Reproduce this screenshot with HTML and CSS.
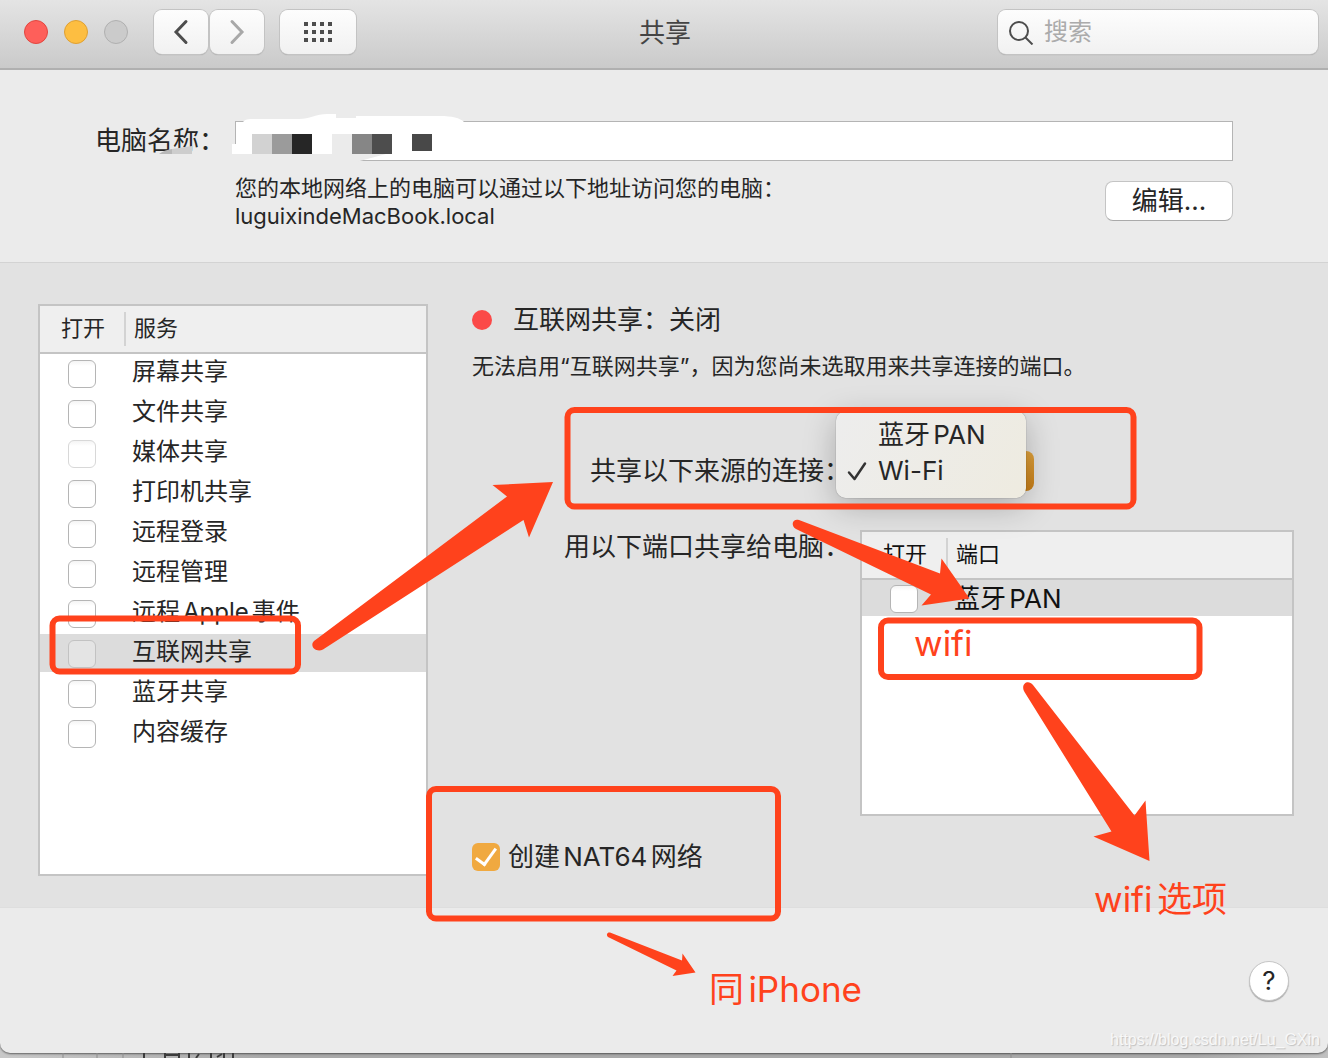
FILE: index.html
```html
<!DOCTYPE html>
<html lang="zh-CN">
<head>
    <meta charset="UTF-8">
    <meta name="viewport" content="width=device-width, initial-scale=1.0">
    <title>共享</title>
    <link rel="stylesheet" href="styles.css">
</head>
<body>
    <div class="window">
        <!-- 标题栏 -->
        <header class="titlebar">
            <div class="tools">
                <div class="lights">
                    <button class="light red" aria-label="关闭"></button>
                    <button class="light yellow" aria-label="最小化"></button>
                    <button class="light gray" aria-label="缩放" disabled></button>
                </div>
                <div class="nav">
                    <button class="tool-btn" aria-label="后退">
                        <svg width="16" height="26" viewBox="0 0 16 26"><path d="M13 2.500L3 13l10 10.500" fill="none" stroke="#4d4d4d" stroke-width="3" stroke-linecap="round"/></svg>
                    </button>
                    <button class="tool-btn" aria-label="前进">
                        <svg width="16" height="26" viewBox="0 0 16 26"><path d="M3 2.500L13 13 3 23.500" fill="none" stroke="#a8a8a8" stroke-width="3" stroke-linecap="round"/></svg>
                    </button>
                </div>
                <button class="tool-btn grid-btn" aria-label="显示全部">
                    <svg width="28" height="20" viewBox="0 0 28 20" fill="#4d4d4d">
                        <path d="M0 0h4v4H0zM8 0h4v4H8zM16 0h4v4h-4zM24 0h4v4h-4zM0 8h4v4H0zM8 8h4v4H8zM16 8h4v4h-4zM24 8h4v4h-4zM0 16h4v4H0zM8 16h4v4H8zM16 16h4v4h-4zM24 16h4v4h-4z"/>
                    </svg>
                </button>
            </div>
            <h1>共享</h1>
            <label class="search">
                <svg width="26" height="26" viewBox="0 0 26 26" fill="none" stroke="#4d4d4d" stroke-width="2"><circle cx="11" cy="12" r="9"/><path d="M17.500 18.500l7 7"/></svg>
                <input type="search" placeholder="搜索" aria-label="搜索">
            </label>
        </header>

        <!-- 电脑名称 -->
        <section class="name-pane">
            <label for="computerName">电脑名称：</label>
            <input type="text" id="computerName">
            <div class="address">
                <p>您的本地网络上的电脑可以通过以下地址访问您的电脑：<br>luguixindeMacBook.local</p>
                <button class="edit-btn">编辑...</button>
            </div>
        </section>

        <!-- 服务列表和详细设置 -->
        <main class="main-pane">
            <div class="table-box services">
                <table>
                    <thead>
                        <tr><th class="col-on">打开</th><th>服务</th></tr>
                    </thead>
                    <tbody>
                        <tr><td><input type="checkbox" id="s1"></td><td><label for="s1">屏幕共享</label></td></tr>
                        <tr><td><input type="checkbox" id="s2"></td><td><label for="s2">文件共享</label></td></tr>
                        <tr><td><input type="checkbox" id="s3" disabled></td><td><label for="s3">媒体共享</label></td></tr>
                        <tr><td><input type="checkbox" id="s4"></td><td><label for="s4">打印机共享</label></td></tr>
                        <tr><td><input type="checkbox" id="s5"></td><td><label for="s5">远程登录</label></td></tr>
                        <tr><td><input type="checkbox" id="s6"></td><td><label for="s6">远程管理</label></td></tr>
                        <tr><td><input type="checkbox" id="s7"></td><td><label for="s7">远程Apple事件</label></td></tr>
                        <tr class="selected"><td><input type="checkbox" id="s8" disabled></td><td><label for="s8">互联网共享</label></td></tr>
                        <tr><td><input type="checkbox" id="s9"></td><td><label for="s9">蓝牙共享</label></td></tr>
                        <tr><td><input type="checkbox" id="s10"></td><td><label for="s10">内容缓存</label></td></tr>
                    </tbody>
                </table>
            </div>

            <div class="detail">
                <h2><span class="dot"></span>互联网共享：关闭</h2>
                <p class="reason">无法启用“互联网共享”，因为您尚未选取用来共享连接的端口。</p>

                <div class="settings">
                    <label class="source-label" for="source">共享以下来源的连接：</label>
                    <div class="source">
                        <select id="source">
                            <option>蓝牙PAN</option>
                            <option selected>Wi-Fi</option>
                        </select>
                        <ul class="popup">
                            <li>蓝牙PAN</li>
                            <li>
                                <svg class="tick" width="20" height="20" viewBox="0 0 20 20"><path d="M2 11.500l5.500 6.500L18 2.500" fill="none" stroke="#333" stroke-width="2.500" stroke-linecap="round" stroke-linejoin="round"/></svg>
                                Wi-Fi
                            </li>
                        </ul>
                    </div>
                    <span class="ports-label">用以下端口共享给电脑：</span>
                    <div class="table-box ports">
                        <table>
                            <thead>
                                <tr><th class="col-on">打开</th><th>端口</th></tr>
                            </thead>
                            <tbody>
                                <tr class="selected"><td><input type="checkbox" id="p1"></td><td><label for="p1">蓝牙PAN</label></td></tr>
                            </tbody>
                        </table>
                    </div>
                </div>

                <label class="nat"><input type="checkbox" checked>创建NAT64网络</label>
            </div>
        </main>

        <footer class="footer">
            <button class="help" aria-label="帮助">?</button>
        </footer>
    </div>

    <!-- 窗口后面露出的内容 -->
    <svg class="behind" width="1328" height="5" viewBox="0 0 1328 5">
        <path d="M63 0v5M97 0v5M123 0v5M1011 0v5" stroke="#8d8d8d"/>
        <path d="M144 0v5M165 0v5M179 0v5M165 2h14M189 0v5M211 0v5M224 0v5M233 0v5M199 1l-3 4M222 1l-5 3" fill="none" stroke="#3c3c3c" stroke-width="2"/>
    </svg>

    <!-- 涂抹、红框和箭头 -->
    <svg class="marks" width="1328" height="1058" viewBox="0 0 1328 1058">
        <path d="M232 154h154l-30 8H232z" fill="#ebebeb"/>
        <path d="M232 144h7l4-22q2-3 8-3h48c10 0 18-5 28-5h9v4h20v-2h84c12 0 20 2 24 6v30h-72v2H232z" fill="#fff"/>
        <path d="M332 134h20v20h-20z" fill="#ebebeb"/>
        <path d="M252 134h20v20h-20z" fill="#d2d2d2"/>
        <path d="M272 134h20v20h-20z" fill="#9b9b9b"/>
        <path d="M292 134h20v20h-20z" fill="#262626"/>
        <path d="M352 134h20v20h-20z" fill="#868686"/>
        <path d="M372 134h20v20h-20z" fill="#4d4d4d"/>
        <path d="M412 134h20v17h-20z" fill="#484848"/>
        <path d="M159 154q5-4 13-5v5z" fill="#b8b8b8"/>
        <path d="M172 149l20-3v8h-20z" fill="#cdcdcd"/>
        <g fill="none" stroke="#ff421c" stroke-width="6">
            <rect x="52.500" y="618.500" width="245.500" height="53" rx="7"/>
            <rect x="567.500" y="410" width="566" height="96.500" rx="7"/>
            <rect x="881" y="620.500" width="318.500" height="56.500" rx="7"/>
            <rect x="429" y="789" width="349" height="129.500" rx="7"/>
        </g>
        <g fill="#ff421c">
            <path d="M314 641L507 496.500 492.500 485 553 482 529 537.500 523.500 520 323 649.500C316 653 309 646 314 641z"/>
            <path d="M799 520L940 573.500 941.500 558.500 969.500 598.500 921.500 605.500 931 594.500 796 529C790 525 793 518 799 520z"/>
            <path d="M1033 685L1134.500 815.500 1145.500 800.500 1149.500 861 1093.500 836.500 1111.500 831.500 1024.500 692C1020 684 1028 679 1033 685z"/>
            <path d="M610 932.500L682 960.500 682.500 953.500 695.500 972.500 672.500 976 676.500 970.500 608 937C606 935 607 932 610 932.500z"/>
        </g>
    </svg>
    <p class="note note-wifi">wifi</p>
    <p class="note note-option">wifi选项</p>
    <p class="note note-iphone">同iPhone</p>
    <p class="watermark">https://blog.csdn.net/Lu_GXin</p>
</body>
</html>
```
FILE: styles.css
```css
* {
    box-sizing: border-box;
}
body {
    margin: 0;
    position: relative;
    min-height: 100vh;
    overflow: hidden;
    background: linear-gradient(90deg, #c8c8c8, #a9a9a9 20%, #a9a9a9 90%, #c0c0c0);
    font-family: Inter, "Noto Sans CJK SC", sans-serif;
    font-size: 26px;
    line-height: 32px;
    color: #262626;
    text-autospace: normal;
}
h1, h2, p, ul {
    margin: 0;
    padding: 0;
    font-weight: normal;
}
button, input, select {
    font: inherit;
    color: inherit;
}
.window {
    background: #ebebeb;
    border-radius: 0 0 10px 10px;
    box-shadow: 0 1px 2px rgba(0, 0, 0, 0.5);
}

/* 标题栏 */
.titlebar {
    display: grid;
    grid-template-columns: 1fr auto 1fr;
    align-items: center;
    padding: 10px 10px 14px;
    background: linear-gradient(#e4e4e4, #cacaca);
    border-bottom: 2px solid #b0b0b0;
}
.titlebar h1 {
    padding: 2px 0 0 2px;
    font-size: 26px;
    color: #444;
}
.tools {
    display: flex;
    align-items: center;
    padding-left: 14px;
}
.lights {
    display: flex;
    gap: 16px;
    margin-right: 26px;
}
.light {
    width: 24px;
    height: 24px;
    padding: 0;
    border-radius: 50%;
    border: 1px solid #b0b0b0;
    background: #cbcbcb;
}
.red { background: #fe5f5a; border-color: #e2463f; }
.yellow { background: #fdbe41; border-color: #dfa033; }
.nav {
    display: flex;
    gap: 2px;
    margin-right: 16px;
}
.tool-btn {
    width: 54px;
    height: 44px;
    padding: 0;
    display: flex;
    align-items: center;
    justify-content: center;
    border: none;
    border-radius: 8px;
    background: linear-gradient(#fdfdfd, #f1f1f1);
    box-shadow: 0 0 0 1px #c3c3c3, 0 1px 1px #999;
}
.grid-btn { width: 76px; }
.search {
    justify-self: end;
    width: 320px;
    max-width: 100%;
    height: 44px;
    display: flex;
    align-items: center;
    gap: 10px;
    padding: 0 10px;
    border-radius: 8px;
    background: linear-gradient(#fdfdfd, #f1f1f1);
    box-shadow: 0 0 0 1px #c3c3c3, 0 1px 1px #999;
}
.search input {
    flex: 1;
    min-width: 0;
    padding: 0;
    border: none;
    background: none;
    font-size: 24px;
}
.search input::placeholder { color: #ababab; }

/* 电脑名称 */
.name-pane {
    display: grid;
    grid-template-columns: auto 1fr;
    column-gap: 10px;
    row-gap: 12px;
    align-items: center;
    padding: 51px 95px 32px;
}
.name-pane > input {
    width: 100%;
    height: 40px;
    border: 1px solid #b4b4b4;
    background: #fff;
}
.address {
    grid-column: 2;
    display: flex;
    justify-content: space-between;
    align-items: center;
    font-size: 22px;
    line-height: 28px;
}
.address p { padding-top: 1px; }
.edit-btn {
    width: 128px;
    height: 40px;
    padding: 0;
    margin-bottom: 2px;
    font-size: 26px;
    text-autospace: no-autospace;
    border: 1px solid #c4c4c4;
    border-bottom-color: #aaa;
    border-radius: 8px;
    background: #fff;
}

/* 表格 */
.main-pane {
    display: grid;
    grid-template-columns: 390px 1fr;
    column-gap: 44px;
    padding: 41px 34px 31px 38px;
    background: #e2e2e2;
    border-top: 1px solid #d3d3d3;
}
.table-box {
    border: 2px solid #c4c4c4;
    background: #fff;
}
.table-box table {
    width: 100%;
    border-collapse: separate;
    border-spacing: 0;
    table-layout: fixed;
}
.table-box th {
    height: 48px;
    padding: 0 8px 2px;
    text-align: left;
    font-size: 22px;
    font-weight: normal;
    background: #efefef;
    border-bottom: 2px solid #c4c4c4;
}
.table-box .col-on {
    width: 86px;
    padding: 0 0 2px 21px;
    background: linear-gradient(#d3d3d3, #d3d3d3) right center / 2px 34px no-repeat #efefef;
}
.table-box td {
    height: 40px;
    padding: 0 6px;
    background-clip: padding-box;
    border-bottom: 2px solid transparent;
}
.table-box td:first-child {
    padding: 2px 0 0 28px;
}
.table-box .selected td { background-color: #dcdcdc; }
.table-box input, .nat input {
    appearance: none;
    display: block;
    width: 28px;
    height: 28px;
    margin: 0;
    border: 1px solid #b5b5b5;
    border-radius: 6px;
    background: linear-gradient(#f4f4f4, #fff 5px);
}
.table-box input:disabled {
    border-color: #d8d8d8;
}
.table-box .selected input:disabled {
    border-color: #c2c2c2;
    background: #e4e4e4;
}
.services {
    height: 572px;
    font-size: 24px;
}
.services td:last-child { padding-bottom: 2px; }
.ports {
    height: 286px;
    color: #111;
}
.ports td { height: 38px; }
.ports td:last-child { padding-top: 2px; }

/* 右侧设置 */
.detail h2 {
    display: flex;
    align-items: center;
    gap: 21px;
    font-size: 26px;
}
.dot {
    width: 20px;
    height: 20px;
    border-radius: 50%;
    background: #fb4948;
}
.reason {
    margin-top: 16px;
    font-size: 22px;
    line-height: 28px;
}
.settings {
    display: grid;
    grid-template-columns: 378px 1fr;
    column-gap: 10px;
    row-gap: 39px;
    margin-top: 71px;
}
.source-label, .ports-label {
    text-align: right;
    white-space: nowrap;
}
.source-label { align-self: center; }
.ports-label { padding-top: 1px; }
.source { position: relative; }
.source select {
    appearance: none;
    display: block;
    width: 174px;
    height: 40px;
    padding: 0 12px;
    border: none;
    border-radius: 8px;
    background: linear-gradient(#e0a23c, #c67d17);
}
.popup {
    position: absolute;
    left: -24px;
    top: -40px;
    width: 190px;
    padding: 6px 0 9px;
    list-style: none;
    line-height: 36px;
    border-radius: 10px;
    background: linear-gradient(120deg, #ededed, #eeebe0);
    box-shadow: 0 0 1px rgba(0, 0, 0, 0.6), 0 8px 32px rgba(0, 0, 0, 0.25);
}
.popup li {
    position: relative;
    padding-left: 42px;
}
.tick {
    position: absolute;
    left: 11px;
    top: 8px;
}
.nat {
    display: flex;
    align-items: center;
    gap: 8px;
    margin-top: 25px;
}
.nat input:checked {
    display: grid;
    place-items: center;
    border: none;
    background: #f0a940;
}
.nat input:checked::after {
    content: "";
    width: 9px;
    height: 18px;
    margin-bottom: 6px;
    border: solid #fff;
    border-width: 0 3px 3px 0;
    transform: rotate(36deg);
}

.footer {
    display: flex;
    justify-content: flex-end;
    padding: 53px 39px 52px;
    border-top: 1px solid #dedede;
}
.help {
    width: 40px;
    height: 40px;
    padding: 0;
    border: 1px solid #c6c6c6;
    border-radius: 50%;
    background: #fff;
    box-shadow: 0 1px 1px #aaa;
}
.behind {
    display: block;
}

/* 标注 */
.marks {
    position: absolute;
    left: 0;
    top: 0;
    pointer-events: none;
}
.note {
    position: absolute;
    font-size: 35px;
    line-height: 44px;
    color: #ff421c;
}
.note-wifi { left: 914px; top: 621px; }
.note-option { left: 1094px; top: 877px; }
.note-iphone { left: 709px; top: 967px; }
.watermark {
    position: absolute;
    right: 8px;
    bottom: 8px;
    font-family: "Liberation Sans", sans-serif;
    font-size: 16px;
    line-height: 20px;
    color: #f8f8f8;
    text-shadow: 1px 1px 1px #c0c0c0;
}
```
